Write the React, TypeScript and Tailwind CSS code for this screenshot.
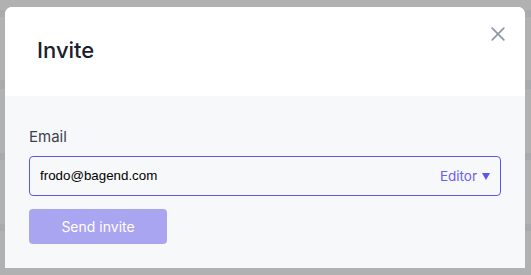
import React from "react";

export default function App() {
  return (
    <div className="relative h-[275px] w-[531px] overflow-hidden bg-[#b1b1b1]">
      <div className="flex flex-col">
        <div className="mt-[10px] h-[7px] bg-[#a8abad]" />
        <div className="mt-[63px] h-[9px] bg-[#a8abad]" />
        <div className="mt-[64px] h-[7px] bg-[#a8abad]" />
        <div className="mt-[64px] h-[7px] bg-[#a8abad]" />
      </div>
      <div className="absolute left-[5px] top-[7px] flex h-[261px] w-[520px] flex-col overflow-hidden rounded-t-[7px] bg-[#f7f8fa] font-['Inter',sans-serif]">
        <div className="relative flex h-[89px] items-center bg-white pl-[32px]">
          <h2 className="mt-[-2px] text-[22px] font-medium text-[#1a202c]">Invite</h2>
          <button className="absolute right-[20px] top-[20px] text-[#8d96a6]">
            <svg width="14" height="14" viewBox="0 0 14 14" fill="none" stroke="currentColor" strokeWidth="1.7" strokeLinecap="round">
              <path d="M1.2 1.2L12.8 12.8M12.8 1.2L1.2 12.8" />
            </svg>
          </button>
        </div>
        <div className="flex flex-col px-[24px] pt-[32px]">
          <label className="text-[15px] leading-[18px] text-[#3d4250]">Email</label>
          <div className="mt-[10px] flex h-[40px] items-center justify-between rounded-[4px] border border-[#5b57ee] pl-[10px] pr-[10px]">
            <span className="font-['Liberation_Sans',Arial,sans-serif] text-[13.333px] text-black">frodo@bagend.com</span>
            <span className="flex items-center gap-[5px] text-[13.5px] text-[#6b60f0]">
              Editor
              <svg width="8" height="7" viewBox="0 0 8 7"><path d="M0 0H8L4 7Z" fill="#5b57ee" /></svg>
            </span>
          </div>
          <button className="mt-[13px] h-[35px] w-[138px] rounded-[4px] bg-[#aaa5f1] text-[14px] text-white">
            Send invite
          </button>
        </div>
      </div>
    </div>
  );
}
